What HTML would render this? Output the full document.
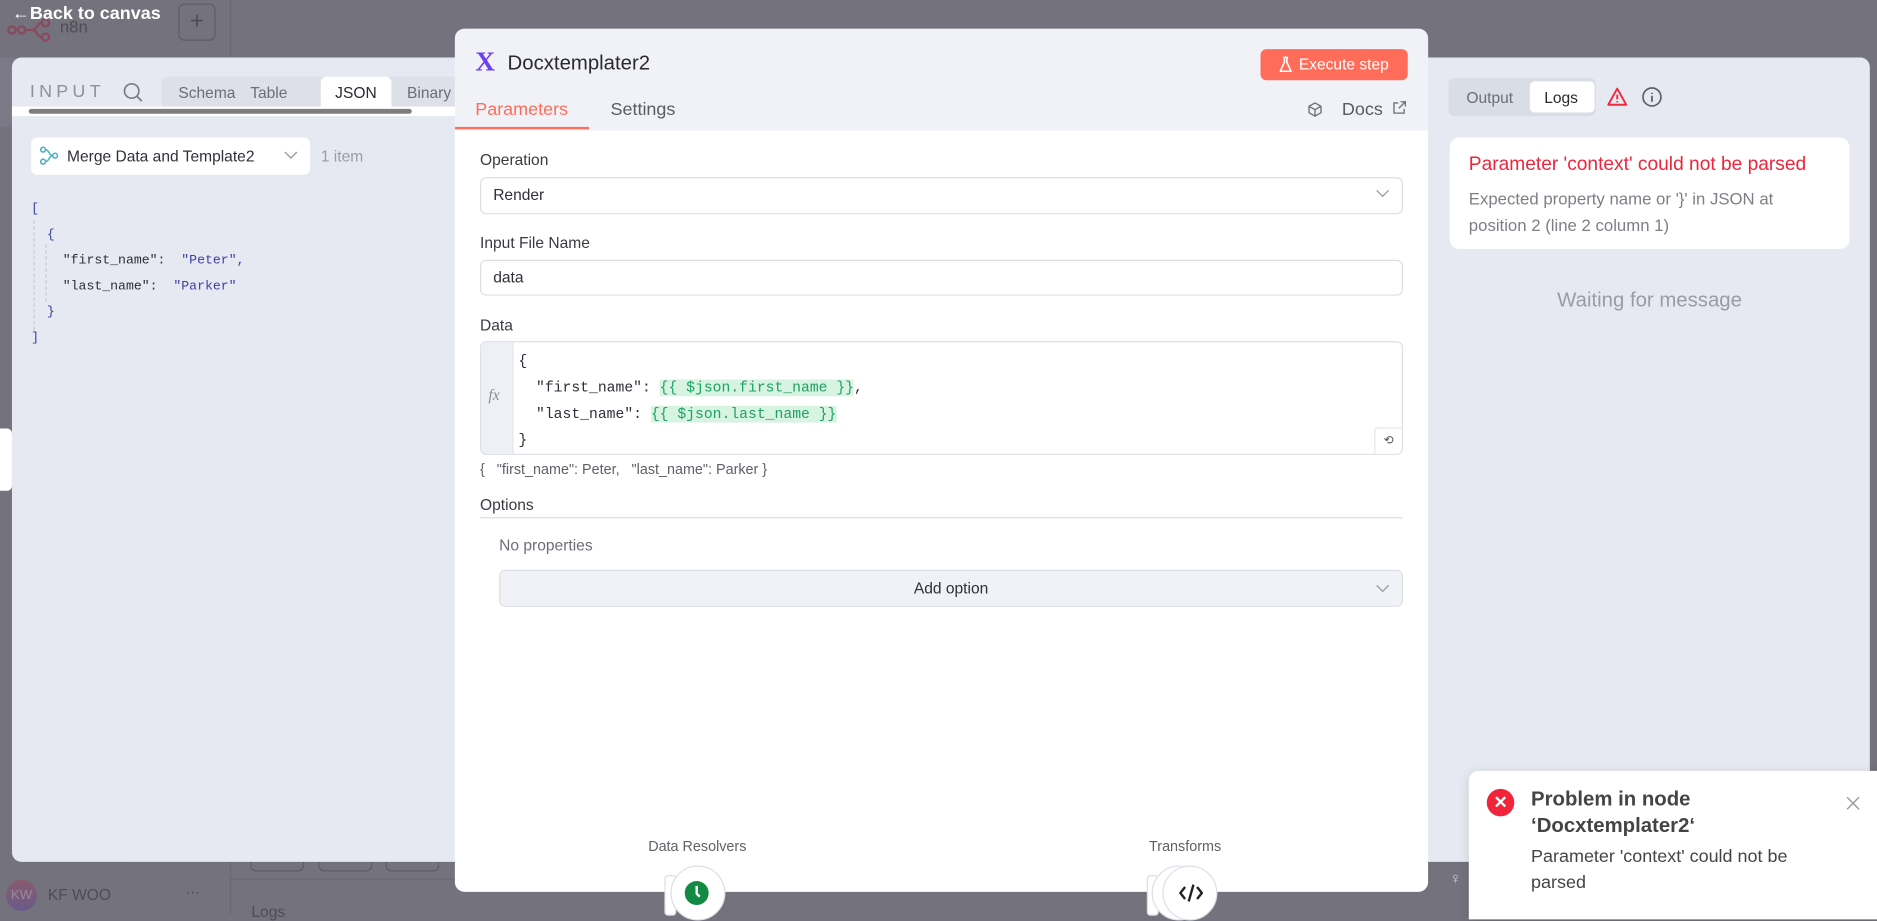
<!DOCTYPE html>
<html><head><meta charset="utf-8">
<style>
*{box-sizing:border-box;margin:0;padding:0}
html,body{width:1877px;height:914px;overflow:hidden;background:#73727d}
#s{position:absolute;left:0;top:0;width:1568px;height:764px;transform:scale(1.19707);transform-origin:0 0;font-family:"Liberation Sans",sans-serif;background:#73727d}
.a{position:absolute}
.mono{font-family:"Liberation Mono",monospace}
</style></head><body><div id="s">

<div class="a" style="left:0;top:48px;width:192px;height:58px;background:#7a7985"></div>
<div class="a" style="left:192px;top:0;width:1px;height:764px;background:#6a6974"></div>
<svg class="a" style="left:5px;top:14px" width="42" height="22"><g fill="none" stroke="#8a4a5e" stroke-width="2"><circle cx="5" cy="11" r="3"/><circle cx="13" cy="11" r="3"/><circle cx="33" cy="5" r="3"/><circle cx="33" cy="17" r="3"/><path d="M16 11h6c4 0 4-6 8-6M22 11c4 0 4 6 8 6"/></g></svg>
<div class="a" style="left:50px;top:14px;color:#4e4d57;font-size:14px">n8n</div>
<div class="a" style="left:10px;top:3px;color:#fff;font-size:15px;font-weight:bold">←Back to canvas</div>
<div class="a" style="left:149px;top:3px;width:31px;height:31px;border:1px solid #5d5c66;border-radius:5px;color:#4e4d57;font-size:20px;text-align:center;line-height:29px">+</div>
<div class="a" style="left:0;top:358px;width:10px;height:52px;background:#fff;border-radius:0 4px 4px 0"></div>

<div class="a" style="left:209px;top:714px;width:45px;height:14px;border:1px solid #5d5c66;border-top:none;border-radius:0 0 5px 5px"></div>
<div class="a" style="left:266px;top:714px;width:45px;height:14px;border:1px solid #5d5c66;border-top:none;border-radius:0 0 5px 5px"></div>
<div class="a" style="left:322px;top:714px;width:45px;height:14px;border:1px solid #5d5c66;border-top:none;border-radius:0 0 5px 5px"></div>
<div class="a" style="left:192px;top:734px;width:200px;height:1px;background:#68676f"></div>
<div class="a" style="left:5px;top:735px;width:26px;height:26px;border-radius:50%;background:linear-gradient(#8a5a70,#6a5a8a);color:#9b8a98;font-size:11px;text-align:center;line-height:26px">KW</div>
<div class="a" style="left:40px;top:740px;color:#4e4d57;font-size:13px">KF WOO</div>
<div class="a" style="left:155px;top:738px;color:#4e4d57;font-size:12px">···</div>
<div class="a" style="left:210px;top:754px;color:#4e4d57;font-size:13px">Logs</div>
<div class="a" style="left:1211px;top:726px;color:#d0d0d8;font-size:13px">♀</div>

<div class="a" style="left:10px;top:48px;width:380px;height:672px;background:#e6e9f2;border-radius:8px">
 <div class="a" style="left:15px;top:20px;color:#8f9198;font-size:15px;letter-spacing:3.5px">INPUT</div>
 <svg class="a" style="left:93px;top:21px" width="17" height="17"><circle cx="7" cy="7" r="6" fill="none" stroke="#7a7c84" stroke-width="1.4"/><path d="M11.5 11.5l4 4" stroke="#7a7c84" stroke-width="1.4"/></svg>
 <div class="a" style="left:125px;top:16px;width:255px;height:26px;background:#dde0e8;border-radius:5px 0 0 0"></div>
 <div class="a" style="left:258px;top:16px;width:59px;height:26px;background:#fff;border-radius:5px 5px 0 0"></div>
 <div class="a" style="left:139px;top:22px;font-size:13px;color:#6b6e76">Schema</div>
 <div class="a" style="left:199px;top:22px;font-size:13px;color:#6b6e76">Table</div>
 <div class="a" style="left:270px;top:22px;font-size:13px;color:#2a2a30">JSON</div>
 <div class="a" style="left:330px;top:22px;font-size:13px;color:#6b6e76">Binary</div>
 <div class="a" style="left:0;top:41px;width:380px;height:8px;background:#fff"></div>
 <div class="a" style="left:14px;top:43px;width:320px;height:4px;background:#7e7e7e;border-radius:2px"></div>
 <div class="a" style="left:16px;top:67px;width:233px;height:31px;background:#fff;border-radius:5px"></div>
 <svg class="a" style="left:23px;top:74px" width="16" height="16"><g fill="none" stroke="#4ab0c4" stroke-width="1.3"><circle cx="3" cy="3" r="2"/><circle cx="3" cy="13" r="2"/><circle cx="13" cy="8" r="2"/><path d="M5 3c3 0 3 5 6 5M5 13c3 0 3-5 6-5"/></g></svg>
 <div class="a" style="left:46px;top:75px;font-size:13px;color:#2f3038">Merge Data and Template2</div>
 <svg class="a" style="left:227px;top:78px" width="12" height="8"><path d="M1 1l5 5 5-5" fill="none" stroke="#9a9ca3" stroke-width="1.1"/></svg>
 <div class="a" style="left:258px;top:75px;font-size:13px;color:#9a9ca3">1 item</div>
 <div class="a" style="left:18px;top:136px;height:92px;border-left:1px dashed #c8cad0"></div>
 <div class="a" style="left:28px;top:156px;height:48px;border-left:1px dashed #c8cad0"></div>
 <div class="a mono" style="left:16px;top:117px;font-size:11px;color:#3d3fa8;line-height:21.5px;white-space:pre">[
  {
    <span style="color:#2d2f36">"first_name":</span>  "Peter",
    <span style="color:#2d2f36">"last_name":</span>  "Parker"
  }
]</div>
</div>

<div class="a" style="left:1190px;top:48px;width:372px;height:672px;background:#e6e9f2;border-radius:0 8px 8px 0">
 <div class="a" style="left:20px;top:17px;width:123px;height:32px;background:#d9dde6;border-radius:5px"></div>
 <div class="a" style="left:88px;top:20px;width:54px;height:26px;background:#fff;border-radius:4px"></div>
 <div class="a" style="left:35px;top:26px;font-size:13px;color:#6b6e76">Output</div>
 <div class="a" style="left:100px;top:26px;font-size:13px;color:#2a2a30">Logs</div>
 <svg class="a" style="left:152px;top:24px" width="18" height="17"><path d="M9 2L1.5 15.5h15z" fill="none" stroke="#f02a3f" stroke-width="1.6" stroke-linejoin="round"/><path d="M9 7v4M9 12.5v1" stroke="#f02a3f" stroke-width="1.6"/></svg>
 <svg class="a" style="left:181px;top:24px" width="18" height="18"><circle cx="9" cy="9" r="7.5" fill="none" stroke="#5f6168" stroke-width="1.4"/><path d="M9 8v5M9 5.5v1" stroke="#5f6168" stroke-width="1.5"/></svg>
 <div class="a" style="left:21px;top:67px;width:334px;height:93px;background:#fff;border-radius:8px">
  <div class="a" style="left:16px;top:14px;font-size:16px;color:#f0243b">Parameter 'context' could not be parsed</div>
  <div class="a" style="left:16px;top:40px;font-size:14px;color:#7d7f86;line-height:22px">Expected property name or '}' in JSON at<br>position 2 (line 2 column 1)</div>
 </div>
 <div class="a" style="left:0;width:376px;top:193px;text-align:center;font-size:17px;color:#9a9ca3">Waiting for message</div>
</div>

<div class="a" style="left:380px;top:24px;width:813px;height:721px;background:#fff;border-radius:8px;overflow:hidden">
 <div class="a" style="left:0;top:0;width:813px;height:85px;background:#f0f2f7"></div>
 <div class="a" style="left:17px;top:15px;font-family:'Liberation Serif',serif;font-weight:bold;font-size:23px;color:#6d3df0">X</div>
 <div class="a" style="left:44px;top:19px;font-size:17px;color:#2a2a30">Docxtemplater2</div>
 <div class="a" style="left:673px;top:17px;width:123px;height:26px;background:#ff6d5a;border-radius:5px;color:#fff;font-size:13px;line-height:26px;padding-left:32px">Execute step</div>
 <svg class="a" style="left:688px;top:23px" width="12" height="14"><path d="M4 1h4M5 1v4L1.5 12.5h9L7 5V1" fill="none" stroke="#fff" stroke-width="1.3" stroke-linejoin="round"/></svg>
 <div class="a" style="left:17px;top:59px;font-size:15px;color:#ff6d5a">Parameters</div>
 <div class="a" style="left:0;top:82px;width:112px;height:2px;background:#ff6d5a"></div>
 <div class="a" style="left:130px;top:59px;font-size:15px;color:#5a5c63">Settings</div>
 <svg class="a" style="left:712px;top:61px" width="13" height="13"><path d="M6.5 1l5 2.8v5.4l-5 2.8-5-2.8V3.8zM1.5 3.8l5 2.8 5-2.8M6.5 6.6V12" fill="none" stroke="#6b6e76" stroke-width="1.1"/></svg>
 <div class="a" style="left:741px;top:59px;font-size:15px;color:#5a5c63">Docs</div>
 <svg class="a" style="left:783px;top:60px" width="12" height="12"><path d="M5 2H1.5v8.5H10V7M7 1h4v4M11 1L5.5 6.5" fill="none" stroke="#6b6e76" stroke-width="1.1"/></svg>

 <div class="a" style="left:21px;top:102px;font-size:13px;color:#3a3b42">Operation</div>
 <div class="a" style="left:21px;top:124px;width:771px;height:31px;border:1px solid #dcdfe6;border-radius:5px"></div>
 <div class="a" style="left:32px;top:131px;font-size:13px;color:#2f3038">Render</div>
 <svg class="a" style="left:769px;top:134px" width="12" height="8"><path d="M1 1l5 5 5-5" fill="none" stroke="#9a9ca3" stroke-width="1.1"/></svg>
 <div class="a" style="left:21px;top:171px;font-size:13px;color:#3a3b42">Input File Name</div>
 <div class="a" style="left:21px;top:193px;width:771px;height:30px;border:1px solid #dcdfe6;border-radius:5px"></div>
 <div class="a" style="left:32px;top:200px;font-size:13px;color:#2f3038">data</div>
 <div class="a" style="left:21px;top:240px;font-size:13px;color:#3a3b42">Data</div>
 <div class="a" style="left:21px;top:261px;width:771px;height:95px;border:1px solid #dcdfe6;border-radius:5px;overflow:hidden">
  <div class="a" style="left:0;top:0;width:27px;height:95px;background:#eef0f6;border-right:1px solid #e3e5ec"></div>
  <div class="a" style="left:6px;top:36px;font-family:'Liberation Serif',serif;font-style:italic;font-size:13px;color:#8a8c94">fx</div>
  <div class="a mono" style="left:31px;top:5px;font-size:12.3px;color:#2f3038;line-height:22px;white-space:pre">{
  "first_name": <span style="background:#d7f3e2;color:#1fa262">{{ $json.first_name }}</span>,
  "last_name": <span style="background:#d7f3e2;color:#1fa262">{{ $json.last_name }}</span>
}</div>
  <div class="a" style="left:746px;top:71px;width:24px;height:23px;background:#fff;border:1px solid #e3e5ec;border-radius:3px 0 0 0;font-size:10px;color:#555;text-align:center;line-height:22px">⟲</div>
 </div>
 <div class="a" style="left:21px;top:361px;font-size:12px;color:#5f6168">{ &nbsp; "first_name": Peter, &nbsp; "last_name": Parker }</div>
 <div class="a" style="left:21px;top:390px;font-size:13px;color:#3a3b42">Options</div>
 <div class="a" style="left:21px;top:408px;width:771px;height:1px;background:#dcdfe6"></div>
 <div class="a" style="left:37px;top:424px;font-size:13px;color:#6b6e76">No properties</div>
 <div class="a" style="left:37px;top:452px;width:755px;height:31px;background:#f0f2f7;border:1px solid #dcdfe6;border-radius:5px;text-align:center;font-size:13px;color:#2f3038;line-height:29px">Add option</div>
 <svg class="a" style="left:769px;top:464px" width="12" height="8"><path d="M1 1l5 5 5-5" fill="none" stroke="#9a9ca3" stroke-width="1.1"/></svg>
 <div class="a" style="left:150px;top:676px;width:105px;text-align:center;font-size:12px;color:#5f6168">Data Resolvers</div>
 <div class="a" style="left:560px;top:676px;width:100px;text-align:center;font-size:12px;color:#5f6168">Transforms</div>
</div>
<div class="a" style="left:555px;top:731px;width:10px;height:34px;background:#fff;border:1px solid #dcdfe6;border-radius:3px"></div>
<div class="a" style="left:560px;top:723px;width:46px;height:46px;border-radius:50%;background:#fff;border:1px solid #dcdfe6"></div>
<svg class="a" style="left:571px;top:735px" width="22" height="22"><circle cx="11" cy="11" r="10" fill="#128a44"/><path d="M11 5v6.5l2.5 2.5" fill="none" stroke="#fff" stroke-width="2"/></svg>
<div class="a" style="left:958px;top:731px;width:10px;height:34px;background:#fff;border:1px solid #dcdfe6;border-radius:3px"></div>
<div class="a" style="left:962px;top:723px;width:46px;height:46px;border-radius:50%;background:#fff;border:1px solid #dcdfe6"></div>
<div class="a" style="left:971px;top:723px;width:46px;height:46px;border-radius:50%;background:#fff;border:1px solid #dcdfe6"></div>
<svg class="a" style="left:985px;top:738px" width="20" height="16"><path d="M5 3L1 8l4 5M15 3l4 5-4 5M12 1L8 15" fill="none" stroke="#222" stroke-width="2"/></svg>

<div class="a" style="left:1227px;top:644px;width:345px;height:124px;background:#fff;border-radius:8px 0 0 0;box-shadow:0 2px 10px rgba(0,0,0,.12)">
 <div class="a" style="left:15px;top:15px;width:23px;height:23px;border-radius:50%;background:#f0243b;color:#fff;font-size:14px;font-weight:bold;text-align:center;line-height:23px">✕</div>
 <div class="a" style="left:52px;top:13px;font-size:17px;font-weight:600;color:#444;line-height:22px">Problem in node<br>‘Docxtemplater2‘</div>
 <div class="a" style="left:52px;top:61px;font-size:15px;color:#444;line-height:22px">Parameter 'context' could not be<br>parsed</div>
 <svg class="a" style="left:315px;top:21px" width="12" height="12"><path d="M1 1l10 10M11 1L1 11" stroke="#9a9ca3" stroke-width="1.2"/></svg>
</div>

</div></body></html>
